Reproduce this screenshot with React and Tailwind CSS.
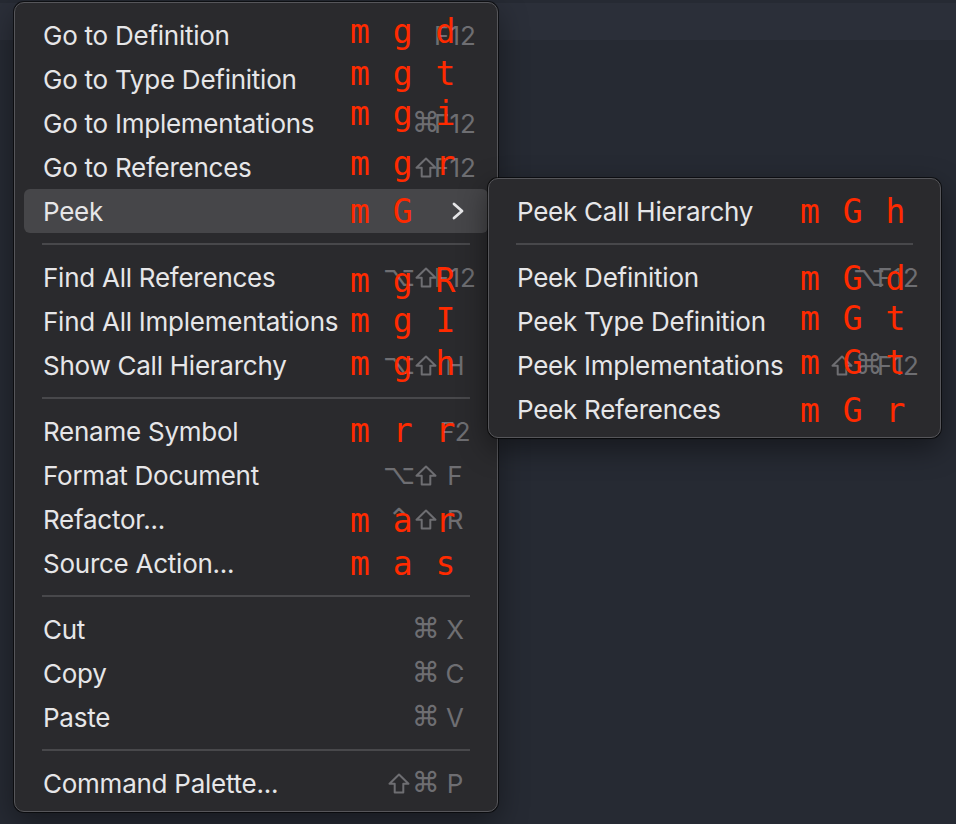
import React from "react";

const RED = "text-[#ff2a00]";

function Chevron() {
  return (
    <svg width="12" height="20" viewBox="0 0 12 20" className="block">
      <path d="M2 3 L10 10 L2 17" fill="none" stroke="#e6e6e8" strokeWidth="2.8" strokeLinecap="round" strokeLinejoin="round" />
    </svg>
  );
}

function ShiftIcon() {
  return (
    <svg width="22" height="21" viewBox="0 0 22 21" className="block shrink-0">
      <path
        d="M11 1.5 L20.5 10.8 L15.3 10.8 L15.3 19.5 L6.7 19.5 L6.7 10.8 L1.5 10.8 Z"
        fill="none"
        stroke="#6e6e72"
        strokeWidth="2"
        strokeLinejoin="round"
      />
    </svg>
  );
}

function Shortcut({ mods = [], k, chevron }) {
  return (
    <div className="ml-auto flex items-center text-[#6e6e72]">
      <div className="mr-[2px] flex items-center gap-[5px]">
        {mods.map((m, i) =>
          m === "⇧" ? (
            <span key={i} className="flex h-[44px] w-[22px] items-center justify-center">
              <ShiftIcon />
            </span>
          ) : (
            <span
              key={i}
              className="flex h-[44px] w-[22px] items-center justify-center font-['DejaVu_Sans',sans-serif] text-[28px] leading-none"
            >
              {m}
            </span>
          )
        )}
      </div>
      <span className="flex w-[32px] justify-center">
        {chevron ? (
          <span className="flex w-full justify-end pr-[7px]">
            <Chevron />
          </span>
        ) : (
          k
        )}
      </span>
    </div>
  );
}

function Row({ label, mods, k, chevron, ann, annTop = 0, annLeft, active }) {
  return (
    <div
      className={
        "relative flex h-[44px] items-center pl-[19px] pr-[17px] rounded-[6px] " +
        (active ? "bg-[#464649]" : "")
      }
    >
      <span className="whitespace-nowrap tracking-[-0.25px]">{label}</span>
      {(mods || k || chevron) && <Shortcut mods={mods} k={k} chevron={chevron} />}
      {ann && (
        <span
          className={
            "absolute whitespace-pre font-['DejaVu_Sans_Mono',monospace] text-[33px] leading-[33px] tracking-[1.5px] " +
            RED
          }
          style={{ top: annTop, left: annLeft }}
        >
          {ann}
        </span>
      )}
    </div>
  );
}

function Sep() {
  return (
    <div className="flex h-[22px] items-center px-[18px]">
      <div className="h-[2px] w-full bg-[#48484b]" />
    </div>
  );
}

const MAIN_LEFT = 326;
const SUB_LEFT = 302;

export default function App() {
  return (
    <div className="relative h-[824px] w-[956px] overflow-hidden bg-[#262a33] font-['Inter','Liberation_Sans',sans-serif] text-[26px] text-[#e6e6e8]">
      <div className="mt-[3px] h-[37px] bg-[#2b2f39]" />

      {/* main menu */}
      <div className="absolute left-[14px] top-[2px] w-[484px] rounded-[10px] border border-[#56565a] bg-[#2a2a2d] px-[9px] pt-[10px] pb-[6px] shadow-[0_0_0_1px_rgba(0,0,0,0.6),0_10px_30px_rgba(0,0,0,0.4)]">
        <Row label="Go to Definition" k="F12" ann="m g d" annTop={2} annLeft={MAIN_LEFT} />
        <Row label="Go to Type Definition" ann="m g t" annTop={0} annLeft={MAIN_LEFT} />
        <Row label="Go to Implementations" mods={["⌘"]} k="F12" ann="m g i" annTop={-4} annLeft={MAIN_LEFT} />
        <Row label="Go to References" mods={["⇧"]} k="F12" ann="m g r" annTop={2} annLeft={MAIN_LEFT} />
        <Row label="Peek" chevron active ann="m G" annTop={6} annLeft={MAIN_LEFT} />
        <Sep />
        <Row label="Find All References" mods={["⌥", "⇧"]} k="F12" ann="m g R" annTop={9} annLeft={MAIN_LEFT} />
        <Row label="Find All Implementations" ann="m g I" annTop={5} annLeft={MAIN_LEFT} />
        <Row label="Show Call Hierarchy" mods={["⌥", "⇧"]} k="H" ann="m g h" annTop={4} annLeft={MAIN_LEFT} />
        <Sep />
        <Row label="Rename Symbol" k="F2" ann="m r r" annTop={5} annLeft={MAIN_LEFT} />
        <Row label="Format Document" mods={["⌥", "⇧"]} k="F" />
        <Row label="Refactor..." mods={["⌃", "⇧"]} k="R" ann="m a r" annTop={7} annLeft={MAIN_LEFT} />
        <Row label="Source Action..." ann="m a s" annTop={6} annLeft={MAIN_LEFT} />
        <Sep />
        <Row label="Cut" mods={["⌘"]} k="X" />
        <Row label="Copy" mods={["⌘"]} k="C" />
        <Row label="Paste" mods={["⌘"]} k="V" />
        <Sep />
        <Row label="Command Palette..." mods={["⇧", "⌘"]} k="P" />
      </div>

      {/* submenu */}
      <div className="absolute left-[488px] top-[178px] w-[453px] rounded-[10px] border border-[#56565a] bg-[#2a2a2d] px-[9px] pt-[10px] pb-[6px] shadow-[0_0_0_1px_rgba(0,0,0,0.6),0_10px_30px_rgba(0,0,0,0.45)]">
        <Row label="Peek Call Hierarchy" ann="m G h" annTop={6} annLeft={SUB_LEFT} />
        <Sep />
        <Row label="Peek Definition" mods={["⌥"]} k="F12" ann="m G d" annTop={7} annLeft={SUB_LEFT} />
        <Row label="Peek Type Definition" ann="m G t" annTop={3} annLeft={SUB_LEFT} />
        <Row label="Peek Implementations" mods={["⇧", "⌘"]} k="F12" ann="m G t" annTop={3} annLeft={SUB_LEFT} />
        <Row label="Peek References" ann="m G r" annTop={7} annLeft={SUB_LEFT} />
      </div>
    </div>
  );
}
